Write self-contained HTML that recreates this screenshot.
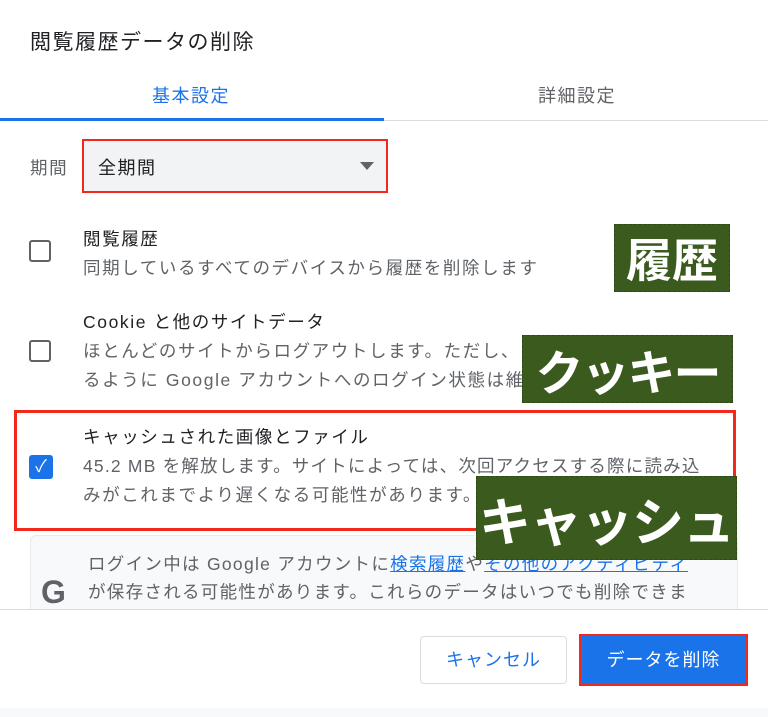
<!DOCTYPE html><html><head><meta charset="utf-8"><style>
*{margin:0;padding:0;box-sizing:border-box}
body{width:768px;height:717px;background:#fff;font-family:"Liberation Sans","Noto Sans CJK JP",sans-serif;position:relative;overflow:hidden;color:#202124}
.a{position:absolute;white-space:nowrap}
.d{color:#5f6368;font-size:17.5px;letter-spacing:1.6px}
.t{font-size:17.5px;letter-spacing:1.6px;color:#202124}
.cb{position:absolute;width:22px;height:22px;border:2.5px solid #5f6368;border-radius:3px}
.g{position:absolute;background:#3b5a1e;color:#fff;font-weight:bold;font-family:"Noto Sans CJK JP",sans-serif;display:flex;align-items:center;justify-content:center;border:1px dashed #2f4a16;white-space:nowrap;overflow:hidden}
</style></head><body>
<div class="a" style="left:30px;top:26px;font-size:21px;letter-spacing:1.5px">閲覧履歴データの削除</div>
<div class="a" style="left:152px;top:82px;font-size:18px;letter-spacing:1.5px;color:#1a73e8">基本設定</div>
<div class="a" style="left:538px;top:82px;font-size:18px;letter-spacing:1.5px;color:#5f6368">詳細設定</div>
<div class="a" style="left:0;top:120px;width:768px;height:1px;background:#dadce0"></div>
<div class="a" style="left:0;top:118px;width:384px;height:3px;background:#1a73e8"></div>
<div class="a d" style="left:30px;top:155px">期間</div>
<div class="a" style="left:82px;top:139px;width:306px;height:54px;border:2px solid #f0291a;background:#f1f3f4"></div>
<div class="a" style="left:98px;top:154px;font-size:18px;letter-spacing:1.5px">全期間</div>
<div class="a" style="left:360px;top:162px;width:0;height:0;border-left:7px solid transparent;border-right:7px solid transparent;border-top:8px solid #5f6368"></div>
<div class="cb" style="left:29px;top:240px"></div>
<div class="a t" style="left:83px;top:226px">閲覧履歴</div>
<div class="a d" style="left:83px;top:255px">同期しているすべてのデバイスから履歴を削除します</div>
<div class="cb" style="left:29px;top:340px"></div>
<div class="a t" style="left:83px;top:309px">Cookie と他のサイトデータ</div>
<div class="a d" style="left:83px;top:338px">ほとんどのサイトからログアウトします。ただし、</div>
<div class="a d" style="left:83px;top:367px">るように Google アカウントへのログイン状態は維</div>
<div class="a" style="left:14px;top:410px;width:722px;height:121px;border:3px solid #f0291a"></div>
<div class="a" style="left:29px;top:455px;width:24px;height:24px;background:#1a73e8;border-radius:3px;color:#fff;font-size:17px;text-align:center;line-height:24px">✓</div>
<div class="a t" style="left:83px;top:424px">キャッシュされた画像とファイル</div>
<div class="a d" style="left:83px;top:453px;letter-spacing:1.2px">45.2 MB を解放します。サイトによっては、次回アクセスする際に読み込</div>
<div class="a d" style="left:83px;top:482px">みがこれまでより遅くなる可能性があります。</div>
<div class="a" style="left:30px;top:535px;width:708px;height:80px;background:#f8f9fa;border:1px solid #e8eaed;border-radius:6px"></div>
<div class="a" style="left:41px;top:574px;font-size:32px;font-weight:bold;color:#5f6368">G</div>
<div class="a d" style="left:88px;top:551px;letter-spacing:1.3px">ログイン中は Google アカウントに<span style="color:#1a73e8;text-decoration:underline">検索履歴</span>や<span style="color:#1a73e8;text-decoration:underline">その他のアクティビティ</span></div>
<div class="a d" style="left:88px;top:579px;letter-spacing:1.3px">が保存される可能性があります。これらのデータはいつでも削除できま</div>
<div class="a" style="left:0;top:609px;width:768px;height:108px;background:#fff;border-top:1px solid #dadce0"></div>
<div class="a" style="left:0;top:708px;width:768px;height:9px;background:#f8f9fa"></div>
<div class="a" style="left:420px;top:636px;width:147px;height:48px;border:1px solid #dadce0;border-radius:4px;color:#1a73e8;font-size:18px;letter-spacing:1px;text-align:center;line-height:46px">キャンセル</div>
<div class="a" style="left:579px;top:634px;width:169px;height:52px;border:2px solid #f0291a;background:#1a73e8;color:#fff;font-size:18px;letter-spacing:1px;text-align:center;line-height:48px">データを削除</div>
<div class="g" style="left:614px;top:224px;width:116px;height:68px;font-size:46px">履歴</div>
<div class="g" style="left:522px;top:335px;width:211px;height:68px;font-size:48px;letter-spacing:-2px">クッキー</div>
<div class="g" style="left:476px;top:476px;width:261px;height:84px;font-size:52px;letter-spacing:-1px">キャッシュ</div>
</body></html>
